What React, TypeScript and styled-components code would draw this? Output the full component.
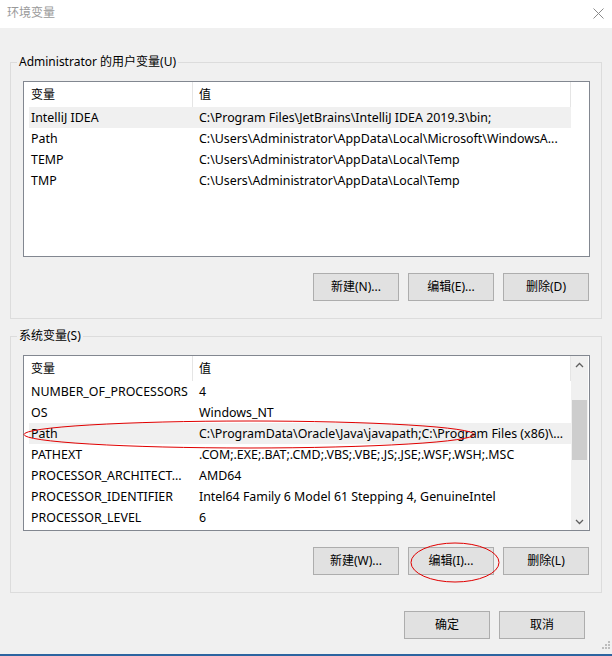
import React from "react";
import styled, { createGlobalStyle } from "styled-components";

const Global = createGlobalStyle`
  html, body { margin: 0; padding: 0; background: #f0f0f0; }
  body { font-family: "Noto Sans", "Noto Sans CJK SC", sans-serif; font-size: 12px; color: #000; }
  * { box-sizing: border-box; }
`;

const Window = styled.div`
  position: relative;
  width: 612px;
  height: 656px;
  display: flex;
  flex-direction: column;
  background: #f0f0f0;
  border-bottom: 2px solid #2c64a0;
  overflow: hidden;
`;

const TitleBar = styled.div`
  height: 28px;
  flex: none;
  background: #fff;
  display: flex;
  align-items: center;
  justify-content: space-between;
  padding: 0 8px 2px 7px;
`;

const Title = styled.span`
  font-size: 12px;
  color: #999;
  line-height: 16px;
`;

const Body = styled.div`
  flex: 1;
  display: flex;
  flex-direction: column;
  padding: 26px 10px 0 10px;
`;

const Group = styled.fieldset<{ $top?: number }>`
  margin: ${(p) => p.$top ?? 0}px 0 0 0;
  padding: 0 11px 17px 12px;
  border: 1px solid #dcdcdc;
  min-width: 0;
`;

const Legend = styled.legend`
  margin-left: -6px;
  padding: 0 2px;
  font-size: 12px;
  line-height: 16px;
`;

const ListView = styled.div`
  margin-top: 11px;
  height: 176px;
  border: 1px solid #828790;
  background: #fff;
  display: flex;
  overflow: hidden;
`;

const ListArea = styled.div`
  flex: 1;
  min-width: 0;
  display: flex;
  flex-direction: column;
`;

const Header = styled.div`
  height: 25px;
  flex: none;
  display: flex;
`;

const HeaderCell = styled.div<{ $w: number; $pad: number }>`
  width: ${(p) => p.$w}px;
  padding-left: ${(p) => p.$pad}px;
  border-right: 1px solid #e5e5e5;
  display: flex;
  align-items: center;
  line-height: 16px;
`;

const Row = styled.div<{ $selected?: boolean }>`
  margin-left: 5px;
  width: 542px;
  height: 21px;
  flex: none;
  display: grid;
  grid-template-columns: 168px 374px;
  background: ${(p) => (p.$selected ? "#f0f0f0" : "transparent")};
`;

const Cell = styled.div`
  padding-left: 2px;
  font-size: 12.4px;
  line-height: 21px;
  white-space: nowrap;
  overflow: hidden;
  text-overflow: clip;
`;

const ScrollBar = styled.div`
  width: 17px;
  flex: none;
  margin-right: 1px;
  background: #f0f0f0;
  display: flex;
  flex-direction: column;
`;

const ArrowBtn = styled.div`
  height: 17px;
  flex: none;
  display: flex;
  align-items: center;
  justify-content: center;
`;

const Track = styled.div`
  flex: 1;
  padding-top: 27px;
`;

const Thumb = styled.div`
  margin-left: 1px;
  width: 15px;
  height: 60px;
  background: #cdcdcd;
`;

const ButtonRow = styled.div<{ $right?: number }>`
  display: flex;
  justify-content: flex-end;
  gap: 9px;
  margin-top: 16px;
  padding-right: ${(p) => p.$right ?? 0}px;
`;

const Button = styled.button`
  width: 86px;
  height: 28px;
  margin: 0;
  padding: 0;
  background: #e1e1e1;
  border: 1px solid #adadad;
  font-family: "Noto Sans", "Noto Sans CJK SC", sans-serif;
  font-size: 12px;
  color: #000;
  line-height: 16px;
`;

const Footer = styled.div`
  display: flex;
  justify-content: flex-end;
  gap: 9px;
  margin-top: 18px;
  padding-right: 17px;
`;

const Overlay = styled.svg`
  position: absolute;
  left: 0;
  top: 0;
  pointer-events: none;
`;

const Grip = styled.svg`
  position: absolute;
  right: 1px;
  bottom: 3px;
`;

type Var = { name: string; value: string; selected?: boolean };

const userVars: Var[] = [
  { name: "IntelliJ IDEA", value: "C:\\Program Files\\JetBrains\\IntelliJ IDEA 2019.3\\bin;", selected: true },
  { name: "Path", value: "C:\\Users\\Administrator\\AppData\\Local\\Microsoft\\WindowsA..." },
  { name: "TEMP", value: "C:\\Users\\Administrator\\AppData\\Local\\Temp" },
  { name: "TMP", value: "C:\\Users\\Administrator\\AppData\\Local\\Temp" },
];

const sysVars: Var[] = [
  { name: "NUMBER_OF_PROCESSORS", value: "4" },
  { name: "OS", value: "Windows_NT" },
  { name: "Path", value: "C:\\ProgramData\\Oracle\\Java\\javapath;C:\\Program Files (x86)\\...", selected: true },
  { name: "PATHEXT", value: ".COM;.EXE;.BAT;.CMD;.VBS;.VBE;.JS;.JSE;.WSF;.WSH;.MSC" },
  { name: "PROCESSOR_ARCHITECT...", value: "AMD64" },
  { name: "PROCESSOR_IDENTIFIER", value: "Intel64 Family 6 Model 61 Stepping 4, GenuineIntel" },
  { name: "PROCESSOR_LEVEL", value: "6" },
];

const Chevron = ({ up }: { up?: boolean }) => (
  <svg width="9" height="6" viewBox="0 0 9 6">
    <path
      d={up ? "M1 5 L4.5 1.5 L8 5" : "M1 1 L4.5 4.5 L8 1"}
      fill="none"
      stroke="#606060"
      strokeWidth="1.3"
    />
  </svg>
);

const VarList = ({ items, scroll }: { items: Var[]; scroll?: boolean }) => (
  <ListView>
    <ListArea>
      <Header>
        <HeaderCell $w={169} $pad={7}>变量</HeaderCell>
        <HeaderCell $w={378} $pad={6}>值</HeaderCell>
      </Header>
      {items.map((v) => (
        <Row key={v.name + v.value} $selected={v.selected}>
          <Cell>{v.name}</Cell>
          <Cell>{v.value}</Cell>
        </Row>
      ))}
    </ListArea>
    {scroll && (
      <ScrollBar>
        <ArrowBtn><Chevron up /></ArrowBtn>
        <Track><Thumb /></Track>
        <ArrowBtn><Chevron /></ArrowBtn>
      </ScrollBar>
    )}
  </ListView>
);

export default function App() {
  return (
    <>
      <Global />
      <Window>
        <TitleBar>
          <Title>环境变量</Title>
          <svg width="11" height="11" viewBox="0 0 11 11">
            <path d="M0.5 0.5 L10.5 10.5 M10.5 0.5 L0.5 10.5" stroke="#8a8a8a" strokeWidth="1" />
          </svg>
        </TitleBar>
        <Body>
          <Group>
            <Legend>Administrator 的用户变量(U)</Legend>
            <VarList items={userVars} />
            <ButtonRow $right={1}>
              <Button>新建(N)...</Button>
              <Button>编辑(E)...</Button>
              <Button>删除(D)</Button>
            </ButtonRow>
          </Group>
          <Group $top={9}>
            <Legend>系统变量(S)</Legend>
            <VarList items={sysVars} scroll />
            <ButtonRow $right={1}>
              <Button>新建(W)...</Button>
              <Button>编辑(I)...</Button>
              <Button>删除(L)</Button>
            </ButtonRow>
          </Group>
          <Footer>
            <Button>确定</Button>
            <Button>取消</Button>
          </Footer>
        </Body>
        <Overlay width="612" height="656" viewBox="0 0 612 656">
          <ellipse cx="249" cy="434.5" rx="225" ry="13.5" fill="none" stroke="#e00000" strokeWidth="1" />
          <ellipse cx="455" cy="562.5" rx="44" ry="19.5" fill="none" stroke="#e00000" strokeWidth="1" />
        </Overlay>
        <Grip width="10" height="10" viewBox="0 0 10 10">
          <g fill="#bdbdbd">
            <rect x="7" y="0" width="2" height="2" />
            <rect x="4" y="3" width="2" height="2" />
            <rect x="7" y="3" width="2" height="2" />
            <rect x="1" y="6" width="2" height="2" />
            <rect x="4" y="6" width="2" height="2" />
            <rect x="7" y="6" width="2" height="2" />
          </g>
        </Grip>
      </Window>
    </>
  );
}
